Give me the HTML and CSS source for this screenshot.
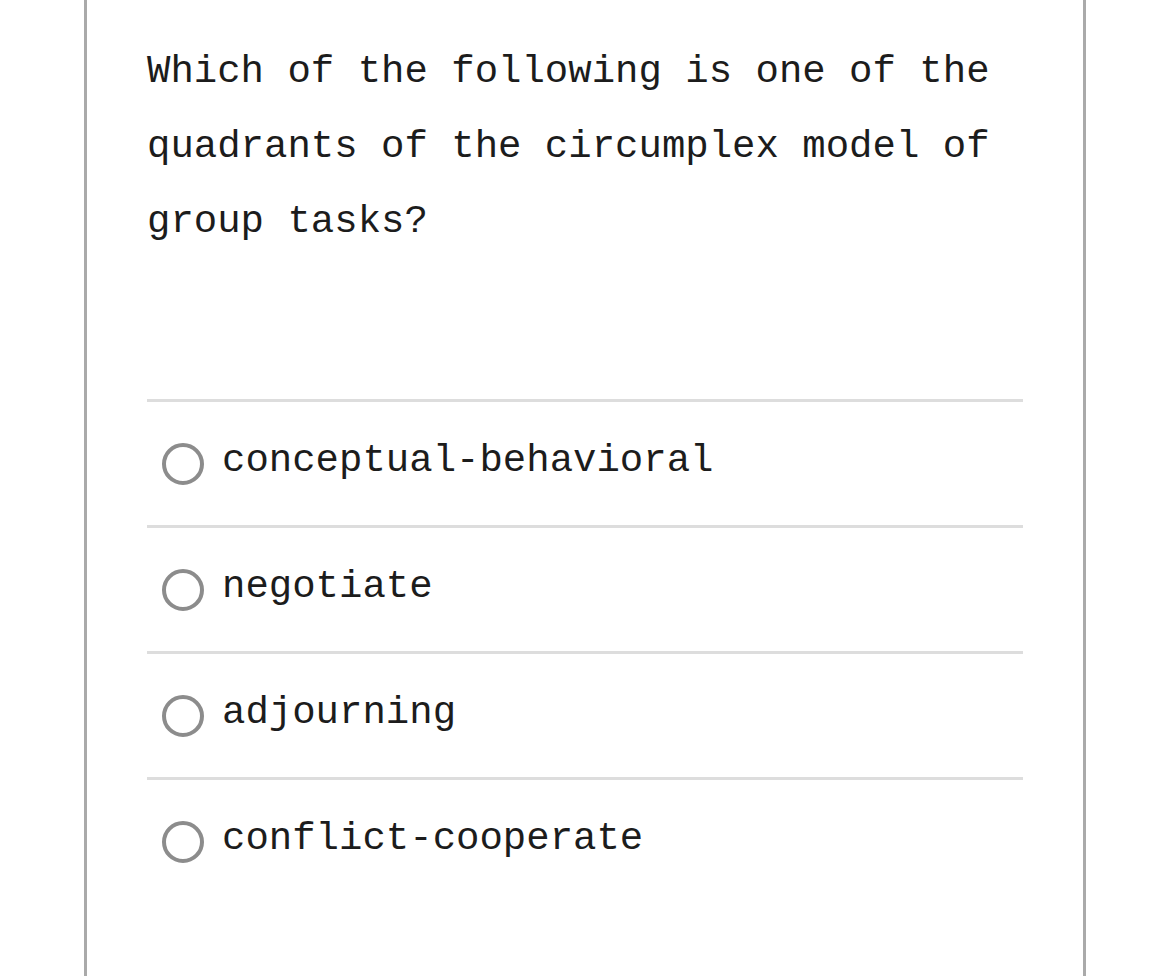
FILE: index.html
```html
<!DOCTYPE html>
<html>
<head>
<meta charset="utf-8">
<link rel="stylesheet" href="styles.css">
</head>
<body>
<div class="card">
  <p class="question">Which of the following is one of the quadrants of the circumplex model of group tasks?</p>
  <div class="options">
    <label class="option"><span class="radio"></span><span class="label">conceptual-behavioral</span></label>
    <label class="option"><span class="radio"></span><span class="label">negotiate</span></label>
    <label class="option"><span class="radio"></span><span class="label">adjourning</span></label>
    <label class="option"><span class="radio"></span><span class="label">conflict-cooperate</span></label>
  </div>
</div>
</body>
</html>
```
FILE: styles.css
```css
html, body {
  margin: 0;
  padding: 0;
  background: #fff;
}
.card {
  box-sizing: border-box;
  margin-left: 84px;
  width: 1002px;
  min-height: 976px;
  border-left: 3px solid #aaaaaa;
  border-right: 3px solid #aaaaaa;
  padding: 35px 60px 32px;
  font-family: "Liberation Mono", "Courier New", monospace;
  color: #1c1c1c;
}
.question {
  margin: 0;
  font-size: 39px;
  line-height: 75px;
}
.options {
  margin-top: 139px;
}
.option {
  display: flex;
  align-items: center;
  height: 123px;
  border-top: 3px solid #dddddd;
  padding-left: 15px;
  gap: 18px;
  font-size: 39px;
}
.radio {
  box-sizing: border-box;
  width: 42px;
  height: 42px;
  border: 4px solid #8c8c8c;
  border-radius: 50%;
  flex: none;
}
.label {
  line-height: 1;
  padding-bottom: 4px;
}
```
